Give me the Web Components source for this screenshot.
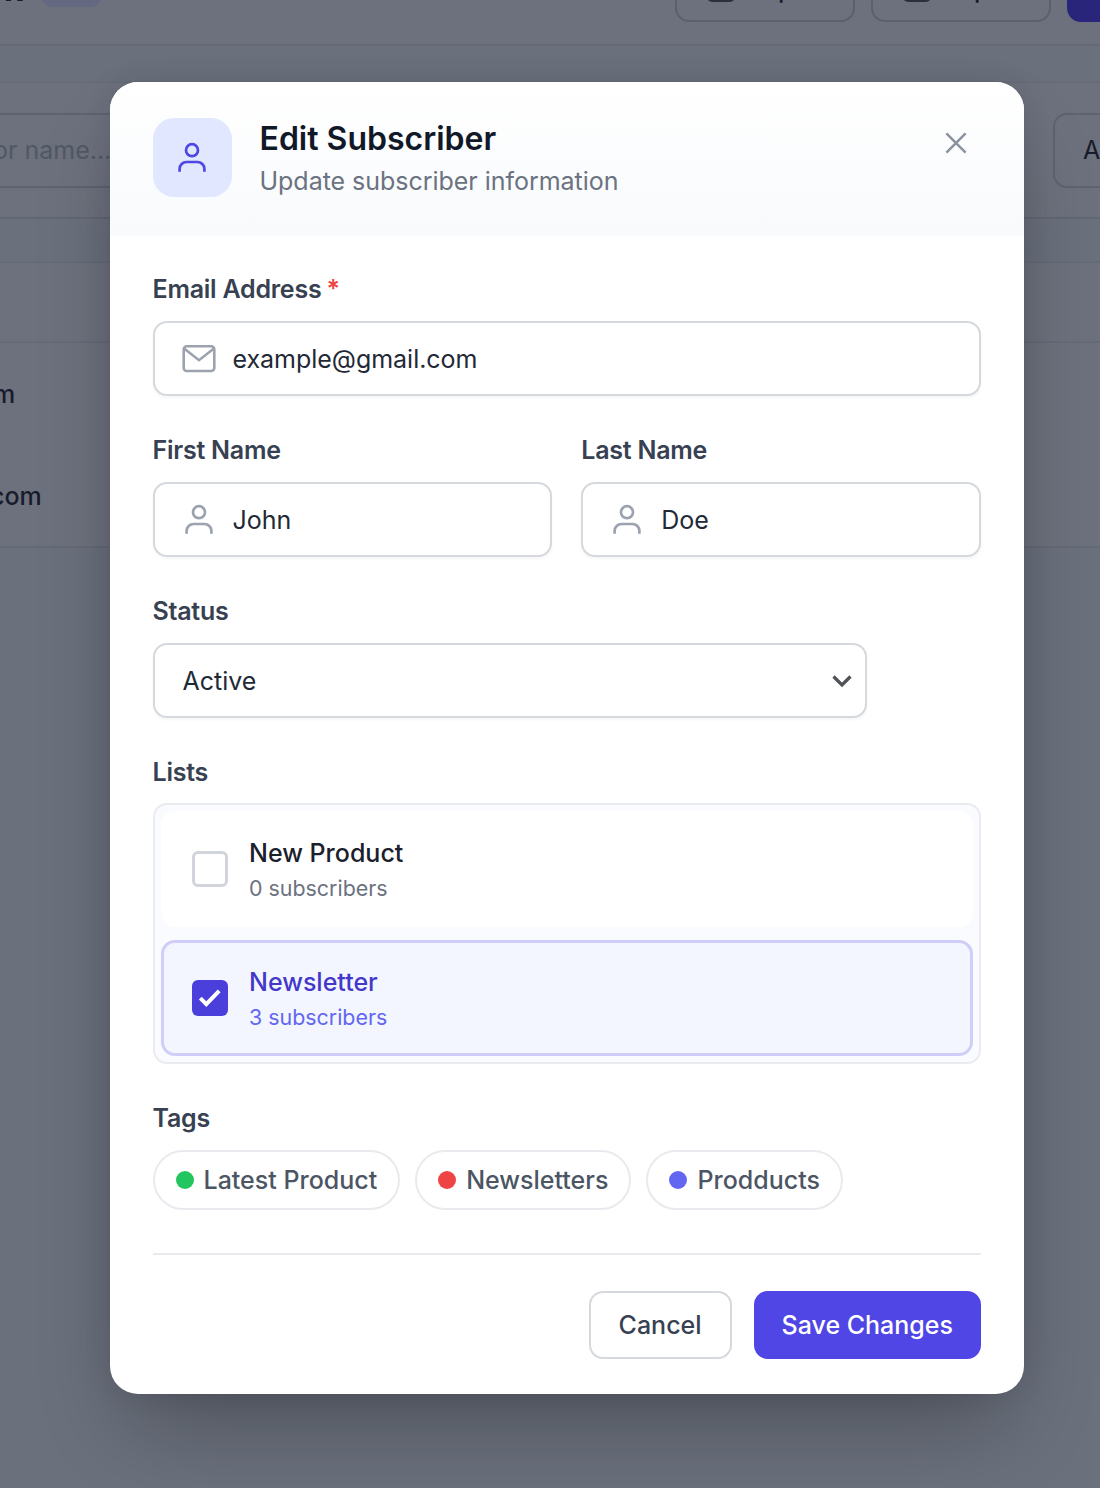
<!DOCTYPE html>
<html lang="en">
<head>
<meta charset="utf-8">
<title>Edit Subscriber</title>
<style>
  html, body {
    margin: 0;
    padding: 0;
  }

  body {
    background: #6a707c;
    color: #111827;
    font-family: Inter, "Liberation Sans", sans-serif;
    font-size: 25px;
    height: 1488px;
    overflow: hidden;
    position: relative;
    width: 1100px;
  }
</style>
</head>
<body>
<subscribers-page></subscribers-page>

<edit-modal heading="Edit Subscriber" subheading="Update subscriber information">
  <form-field label="Email Address" required>
    <text-input icon="mail">example@gmail.com</text-input>
  </form-field>
  <field-row>
    <form-field label="First Name">
      <text-input icon="user">John</text-input>
    </form-field>
    <form-field label="Last Name">
      <text-input icon="user">Doe</text-input>
    </form-field>
  </field-row>
  <form-field label="Status">
    <select-input>Active</select-input>
  </form-field>
  <form-field label="Lists">
    <check-list>
      <check-item name="New Product" count="0 subscribers"></check-item>
      <check-item name="Newsletter" count="3 subscribers" checked></check-item>
    </check-list>
  </form-field>
  <form-field label="Tags">
    <tag-group>
      <tag-chip color="#22c55e">Latest Product</tag-chip>
      <tag-chip color="#ef4444">Newsletters</tag-chip>
      <tag-chip color="#6366f1">Prodducts</tag-chip>
    </tag-group>
  </form-field>
  <action-button slot="actions">Cancel</action-button>
  <action-button slot="actions" primary>Save Changes</action-button>
</edit-modal>

<script>
const ICONS = {
  user: {
    size: 36,
    width: 2.7,
    body: '<circle cx="18" cy="10.2" r="6"/><path d="M5.6 31.8v-2.8a7 7 0 0 1 7-7h10.8a7 7 0 0 1 7 7v2.8"/>',
  },
  mail: {
    size: 36,
    width: 2.6,
    body: '<rect x="2.7" y="5.2" width="30.6" height="24.8" rx="3"/><path d="M3.4 7.8 18 19.2 32.6 7.8"/>',
  },
  close: {
    size: 36,
    width: 2.5,
    body: '<path d="M8.4 8.4l19.2 19.2M27.6 8.4 8.4 27.6"/>',
  },
  chevron: {
    size: 20,
    width: 3.2,
    body: '<path d="M1.5 5.5 10 14l8.5-8.5"/>',
  },
  check: {
    size: 36,
    width: 4,
    body: '<path d="M8.3 18.2l6 6L27.2 10.9"/>',
  },
};

function icon(name) {
  const { size, width, body } = ICONS[name];
  return `
    <svg width="${size}" height="${size}" viewBox="0 0 ${size} ${size}" fill="none"
      stroke="currentColor" stroke-width="${width}" aria-hidden="true">${body}</svg>
  `;
}

class BaseElement extends HTMLElement {
  connectedCallback() {
    if (!this.shadowRoot) {
      this.attachShadow({ mode: 'open' });
    }
    this.shadowRoot.innerHTML = `
      <style>
        :host { box-sizing: border-box; display: block; }
        * { box-sizing: border-box; }
        svg { display: block; flex: none; }
        ${this.styles()}
      </style>
      ${this.markup()}
    `;
  }

  styles() {
    return '';
  }

  markup() {
    return '<slot></slot>';
  }
}

// The dimmed page that stays visible round the dialog.
class SubscribersPage extends BaseElement {
  styles() {
    return `
      :host {
        color: #171c2c;
        height: 1488px;
        overflow: hidden;
      }

      header {
        background: #6d717e;
        border-bottom: 2px solid #666a76;
        display: flex;
        height: 46px;
        justify-content: space-between;
        overflow: hidden;
      }

      .title {
        display: flex;
        gap: 16px;
        margin: -39px 0 0 -8px;
      }

      h1 {
        font-size: 36px;
        font-weight: 700;
        line-height: 54px;
        margin: 0 0 -10px;
      }

      .badge {
        background: #646880;
        border-radius: 12px;
        height: 46px;
        width: 61px;
      }

      .actions {
        display: flex;
        gap: 16px;
        margin: -45px -60px 0 0;
      }

      .button {
        align-items: center;
        border: 2px solid #5b606c;
        border-radius: 14px;
        display: flex;
        font-weight: 500;
        gap: 14px;
        height: 67px;
        padding-left: 30px;
        width: 180px;
      }

      .button i {
        border: 3px solid #2a2f3d;
        border-radius: 5px;
        height: 26px;
        width: 28px;
      }

      .add {
        background: #29257a;
        border-color: #29257a;
        width: 93px;
      }

      main {
        padding-top: 35px;
      }

      .card {
        background: #6d717d;
        border-bottom: 2px solid #666a76;
        border-top: 2px solid #676c78;
        height: 467px;
      }

      .filters {
        align-items: center;
        border-bottom: 2px solid #626773;
        display: flex;
        height: 136px;
        justify-content: space-between;
      }

      .search,
      .filter {
        align-items: center;
        border: 2px solid #5e636f;
        display: flex;
        height: 75px;
      }

      .search {
        border-left: 0;
        color: #505866;
        width: 600px;
      }

      .search span {
        margin-left: -7px;
      }

      .filter {
        border-radius: 14px 0 0 14px;
        border-right: 0;
        overflow: hidden;
        padding-left: 28px;
        width: 47px;
      }

      .head {
        background: #6a707c;
        border-bottom: 2px solid #656b77;
        height: 44px;
      }

      .group {
        border-bottom: 2px solid #656b77;
        height: 80px;
      }

      .row {
        align-items: center;
        display: flex;
        font-weight: 500;
        height: 102px;
      }

      .row span {
        margin-left: -7px;
      }

      .row:last-child span {
        margin-left: -10px;
      }
    `;
  }

  markup() {
    return `
      <header>
        <div class="title"><h1>m</h1><div class="badge"></div></div>
        <div class="actions">
          <div class="button"><i></i>Import</div>
          <div class="button"><i></i>Export</div>
          <div class="button add"></div>
        </div>
      </header>
      <main>
        <div class="card">
          <div class="filters">
            <div class="search"><span>or name...</span></div>
            <div class="filter">All</div>
          </div>
          <div class="head"></div>
          <div class="group"></div>
          <div class="row"><span>m</span></div>
          <div class="row"><span>com</span></div>
        </div>
      </main>
    `;
  }
}

class EditModal extends BaseElement {
  styles() {
    return `
      :host {
        background: #fff;
        border-radius: 28px;
        box-shadow: 0 45px 89px -21px rgba(0, 0, 0, 0.3), 0 0 26px rgba(31, 35, 50, 0.12);
        height: 1312px;
        left: 110px;
        overflow: hidden;
        position: absolute;
        top: 82px;
        width: 914px;
      }

      header {
        background: linear-gradient(#fff, #f8fafc);
        display: flex;
        height: 154px;
        padding: 36px 43px 0 42.5px;
      }

      .badge {
        align-items: center;
        background: #e0e7ff;
        border-radius: 21px;
        color: #4f46e5;
        display: flex;
        flex: none;
        height: 79px;
        justify-content: center;
        margin-right: 28px;
        width: 79px;
      }

      .badge svg {
        margin-left: -1px;
      }

      .titles {
        flex: 1;
      }

      h2 {
        color: #111827;
        font-size: 32px;
        font-weight: 600;
        line-height: 42px;
        margin: 0;
      }

      p {
        color: #6b7280;
        letter-spacing: -0.03px;
        line-height: 36px;
        margin: 3px 0 0;
      }

      button {
        appearance: none;
        background: none;
        border: 0;
        color: #8b93a1;
        height: 36px;
        margin: 7px 7px 0 0;
        padding: 0;
        width: 36px;
      }

      .body {
        display: flex;
        flex-direction: column;
        gap: 37px;
        padding: 36px 43px 0 42.5px;
      }

      footer {
        border-top: 2px solid #e9eaee;
        display: flex;
        gap: 22px;
        justify-content: flex-end;
        margin: 43px 43px 0;
        padding-top: 36px;
      }
    `;
  }

  markup() {
    return `
      <header>
        <div class="badge">${icon('user')}</div>
        <div class="titles">
          <h2>${this.getAttribute('heading')}</h2>
          <p>${this.getAttribute('subheading')}</p>
        </div>
        <button type="button" aria-label="Close">${icon('close')}</button>
      </header>
      <div class="body"><slot></slot></div>
      <footer><slot name="actions"></slot></footer>
    `;
  }
}

class FieldRow extends BaseElement {
  styles() {
    return `
      :host {
        display: grid;
        gap: 29px;
        grid-template-columns: 1fr 1fr;
      }
    `;
  }
}

class FormField extends BaseElement {
  styles() {
    return `
      label {
        color: #374151;
        display: block;
        font-weight: 600;
        letter-spacing: -0.24px;
        line-height: 35px;
        margin-bottom: 14px;
      }

      .required {
        color: #ef4444;
        margin-left: 5px;
      }
    `;
  }

  markup() {
    const mark = this.hasAttribute('required') ? '<span class="required">*</span>' : '';
    return `<label>${this.getAttribute('label')}${mark}</label><slot></slot>`;
  }
}

class TextInput extends BaseElement {
  styles() {
    return `
      :host {
        align-items: center;
        background: #fff;
        border: 2px solid #d5d8dd;
        border-radius: 14px;
        box-shadow: 0 2px 3px rgba(0, 0, 0, 0.04);
        color: #1f2937;
        display: flex;
        gap: 16px;
        height: 75px;
        letter-spacing: -0.03px;
        padding: 0 26px;
      }

      svg {
        color: #9ca3af;
      }
    `;
  }

  markup() {
    return `${icon(this.getAttribute('icon'))}<span><slot></slot></span>`;
  }
}

class SelectInput extends BaseElement {
  styles() {
    return `
      :host {
        align-items: center;
        background: #fff;
        border: 2px solid #d5d8dd;
        border-radius: 14px;
        box-shadow: 0 2px 3px rgba(0, 0, 0, 0.04);
        color: #1f2937;
        display: flex;
        height: 75px;
        justify-content: space-between;
        padding: 0 13px 0 28px;
        width: 714px;
      }

      svg {
        color: #4f5358;
      }
    `;
  }

  markup() {
    return `<span><slot></slot></span>${icon('chevron')}`;
  }
}

class CheckList extends BaseElement {
  styles() {
    return `
      :host {
        background: #fafbfe;
        border: 2px solid #e9ebf0;
        border-radius: 14px;
        display: flex;
        flex-direction: column;
        gap: 13px;
        height: 261px;
        margin-top: -1px;
        padding: 6px 6px 0 6.5px;
      }
    `;
  }
}

class CheckItem extends BaseElement {
  styles() {
    return `
      :host {
        align-items: center;
        background: #fff;
        border: 3px solid #fff;
        border-radius: 14px;
        display: flex;
        flex: none;
        gap: 21px;
        height: 116px;
        padding: 0 28px;
      }

      :host([checked]) {
        background: #f3f6ff;
        border-color: #d0cef8;
      }

      .box {
        background: #fff;
        border: 3px solid #d1d5db;
        border-radius: 6px;
        color: #fff;
        flex: none;
        height: 36px;
        width: 36px;
      }

      :host([checked]) .box {
        background: #4a3fdb;
        border: 0;
      }

      .name {
        color: #1a202c;
        font-weight: 500;
        line-height: 35px;
      }

      .count {
        color: #6b7280;
        font-size: 21.4px;
        line-height: 29px;
        margin-top: 3px;
      }

      .text {
        padding-top: 1px;
      }

      :host([checked]) .name {
        color: #4338ca;
      }

      :host([checked]) .count {
        color: #6366f1;
      }
    `;
  }

  markup() {
    return `
      <div class="box">${this.hasAttribute('checked') ? icon('check') : ''}</div>
      <div class="text">
        <div class="name">${this.getAttribute('name')}</div>
        <div class="count">${this.getAttribute('count')}</div>
      </div>
    `;
  }
}

class TagGroup extends BaseElement {
  styles() {
    return ':host { display: flex; gap: 15px; }';
  }
}

class TagChip extends BaseElement {
  styles() {
    return `
      :host {
        align-items: center;
        background: #fff;
        border: 2px solid #e9eaee;
        border-radius: 30px;
        color: #4b5563;
        display: flex;
        font-weight: 500;
        gap: 10px;
        height: 60px;
        padding: 0 21px;
      }

      i {
        background: ${this.getAttribute('color')};
        border-radius: 50%;
        height: 18px;
        width: 18px;
      }
    `;
  }

  markup() {
    return '<i></i><span><slot></slot></span>';
  }
}

class ActionButton extends BaseElement {
  styles() {
    return `
      button {
        appearance: none;
        background: #fff;
        border: 2px solid #d5d8dd;
        border-radius: 14px;
        color: #374151;
        display: block;
        font: 500 25px Inter, "Liberation Sans", sans-serif;
        height: 68px;
        padding: 0 28px;
      }

      :host([primary]) button {
        background: #4f46e5;
        border-color: #4f46e5;
        color: #fff;
        padding: 0 26px;
      }
    `;
  }

  markup() {
    return '<button type="button"><slot></slot></button>';
  }
}

customElements.define('subscribers-page', SubscribersPage);
customElements.define('edit-modal', EditModal);
customElements.define('field-row', FieldRow);
customElements.define('form-field', FormField);
customElements.define('text-input', TextInput);
customElements.define('select-input', SelectInput);
customElements.define('check-list', CheckList);
customElements.define('check-item', CheckItem);
customElements.define('tag-group', TagGroup);
customElements.define('tag-chip', TagChip);
customElements.define('action-button', ActionButton);
</script>
</body>
</html>
